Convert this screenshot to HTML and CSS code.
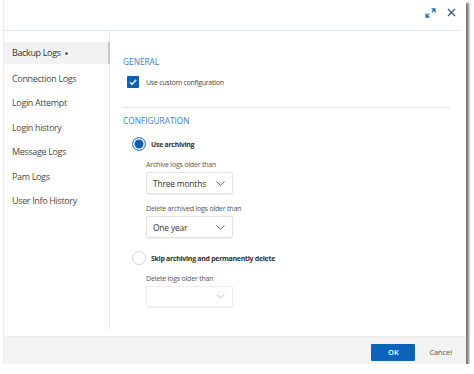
FILE: index.html
```html
<!DOCTYPE html>
<html>
<head>
<meta charset="utf-8">
<link rel="stylesheet" href="styles.css">
</head>
<body>
<div class="dialog">
  <div class="header">
    <svg class="icon" width="11" height="10" viewBox="0 0 11 10"><path d="M6.5 1H10V4.5M10 1L6.8 4.2M1 5.5V9H4.5M1 9L4.2 5.8" fill="none" stroke="#2c6cb3" stroke-width="1.3"/></svg>
    <svg class="icon" width="9" height="9" viewBox="0 0 9 9"><path d="M1 1L8 8M8 1L1 8" stroke="#345f8c" stroke-width="1.4"/></svg>
  </div>
  <div class="main">
    <nav class="sidebar">
      <div class="item active">Backup Logs <span class="dot"></span></div>
      <div class="item">Connection Logs</div>
      <div class="item">Login Attempt</div>
      <div class="item">Login history</div>
      <div class="item">Message Logs</div>
      <div class="item">Pam Logs</div>
      <div class="item">User Info History</div>
    </nav>
    <section class="content">
      <div class="heading">GENERAL</div>
      <div class="check-row">
        <span class="checkbox"><svg width="12" height="12" viewBox="0 0 12 12"><path d="M3 6.2L5.1 8.2L9.2 3.8" fill="none" stroke="#fff" stroke-width="1.4"/></svg></span>
        <span class="check-label">Use custom configuration</span>
      </div>
      <div class="divider"></div>
      <div class="heading heading2">CONFIGURATION</div>
      <div class="radio-row">
        <span class="radio checked"></span>
        <span class="radio-label">Use archiving</span>
      </div>
      <div class="field">
        <div class="field-label">Archive logs older than</div>
        <div class="select"><span>Three months</span><svg width="9" height="5" viewBox="0 0 9 5"><path d="M0.5 0.5L4.5 4.3L8.5 0.5" fill="none" stroke="#666" stroke-width="1"/></svg></div>
      </div>
      <div class="field">
        <div class="field-label">Delete archived logs older than</div>
        <div class="select"><span>One year</span><svg width="9" height="5" viewBox="0 0 9 5"><path d="M0.5 0.5L4.5 4.3L8.5 0.5" fill="none" stroke="#666" stroke-width="1"/></svg></div>
      </div>
      <div class="radio-row radio-row2">
        <span class="radio"></span>
        <span class="radio-label">Skip archiving and permanently delete</span>
      </div>
      <div class="field field-disabled">
        <div class="field-label">Delete logs older than</div>
        <div class="select disabled"><span></span><svg width="9" height="5" viewBox="0 0 9 5"><path d="M0.5 0.5L4.5 4.3L8.5 0.5" fill="none" stroke="#c4c4c4" stroke-width="1"/></svg></div>
      </div>
    </section>
  </div>
  <div class="footer">
    <button class="ok">OK</button>
    <span class="cancel">Cancel</span>
  </div>
</div>
</body>
</html>
```

FILE: styles.css
```css
* { box-sizing: border-box; }
html, body { margin: 0; padding: 0; background: #fff; }
body { font-family: "Open Sans", "Liberation Sans", sans-serif; color: #444; }

.dialog {
  margin-left: 3px;
  width: 463px;
  height: 364px;
  background: #fff;
  border-left: 1px solid #ececec;
  box-shadow: 3px 3px 2px rgba(0,0,0,0.5);
  display: flex;
  flex-direction: column;
}

.header {
  height: 31px;
  margin-right: 6px;
  border-bottom: 1px solid #dfe6ee;
  display: flex;
  justify-content: flex-end;
  align-items: flex-start;
  padding-top: 8px;
  padding-right: 4px;
  gap: 11px;
}
.icon { display: block; }

.main {
  flex: 1;
  display: flex;
  padding-bottom: 7px;
}

.sidebar {
  width: 106px;
  padding-top: 11px;
  border-right: 1px solid #e6e6e6;
}
.item {
  height: 24.5px;
  line-height: 23px;
  padding-left: 8px;
  font-size: 9px;
  letter-spacing: -0.35px;
  color: #4a4a4a;
  white-space: nowrap;
}
.item.active {
  height: 22px;
  margin-bottom: 2.5px;
  line-height: 22px;
  background: #f2f2f2;
  margin-right: -1px;
  border-right: 2px solid #c8c8c8;
  color: #333;
}
.dot {
  display: inline-block;
  width: 3px;
  height: 3px;
  border-radius: 50%;
  background: #666;
  vertical-align: middle;
  margin-left: 2px;
}

.content {
  flex: 1;
  padding: 26px 14px 0 13px;
}
.heading {
  font-size: 8.3px;
  line-height: 10px;
  color: #3a80c4;
}
.check-row {
  display: flex;
  align-items: center;
  gap: 7px;
  margin-top: 9px;
  padding-left: 4px;
  height: 12px;
}
.checkbox {
  width: 12px;
  height: 12px;
  background: #0c5fb5;
  border-radius: 1px;
  display: block;
}
.checkbox svg { display: block; }
.check-label {
  font-size: 7px;
  letter-spacing: -0.25px;
  color: #444;
}
.divider {
  margin-top: 19px;
  border-top: 1px solid #e3e3e3;
  margin-right: 2px;
}
.heading2 { margin-top: 8px; }

.radio-row {
  display: flex;
  align-items: center;
  gap: 5px;
  margin-top: 11px;
  padding-left: 9px;
  height: 14px;
}
.radio {
  width: 14px;
  height: 14px;
  border-radius: 50%;
  border: 1px solid #d5d5d5;
  background: #fff;
  display: block;
}
.radio.checked {
  border: 1.5px solid #4b8bd0;
  background: #0d5db3;
  box-shadow: inset 0 0 0 1.5px #fff;
}
.radio-label {
  font-size: 7px;
  font-weight: 700;
  letter-spacing: -0.3px;
  color: #333;
}
.radio-row2 { margin-top: 13px; }

.field { padding-left: 23px; margin-top: 9px; }
.field + .field { margin-top: 10px; }
.field-label {
  font-size: 7px;
  line-height: 9px;
  letter-spacing: -0.2px;
  color: #555;
}
.select {
  margin-top: 3px;
  width: 87px;
  height: 22px;
  border: 1px solid #e2e2e2;
  border-radius: 2px;
  box-shadow: 0 1px 1px rgba(0,0,0,0.06);
  display: flex;
  align-items: center;
  justify-content: space-between;
  padding: 0 7px 0 6px;
  font-size: 8.4px;
  letter-spacing: -0.15px;
  color: #333;
}
.select svg { display: block; }
.field-disabled { margin-top: 9px; }
.select.disabled { height: 21px; border-color: #ededed; margin-top: 3px; }

.footer {
  height: 28px;
  background: #f3f3f3;
  border-top: 1px solid #e9e9e9;
  display: flex;
  justify-content: flex-end;
  align-items: center;
  padding-top: 3px;
  padding-right: 14px;
  gap: 14px;
}
.ok {
  width: 44px;
  height: 17px;
  border: none;
  border-radius: 1px;
  background: #0b64b8;
  color: #fff;
  font-family: "Open Sans", "Liberation Sans", sans-serif;
  font-size: 7.5px;
  font-weight: 600;
  padding: 0;
}
.cancel {
  font-size: 7.5px;
  color: #555;
  letter-spacing: -0.1px;
}
```
